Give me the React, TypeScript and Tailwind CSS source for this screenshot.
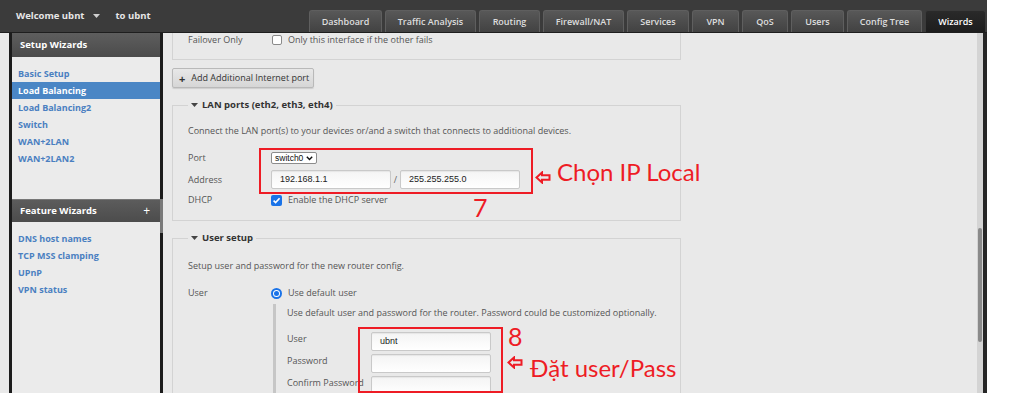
import React from "react";

const tabs: { label: string; w: string; active?: boolean }[] = [
  { label: "Dashboard", w: "w-[73px]" },
  { label: "Traffic Analysis", w: "w-[91px]" },
  { label: "Routing", w: "w-[61px]" },
  { label: "Firewall/NAT", w: "w-[81px]" },
  { label: "Services", w: "w-[62px]" },
  { label: "VPN", w: "w-[47px]" },
  { label: "QoS", w: "w-[46px]" },
  { label: "Users", w: "w-[53px]" },
  { label: "Config Tree", w: "w-[75px]" },
  { label: "Wizards", w: "w-[61px]", active: true },
];

function Caret({ className = "" }: { className?: string }) {
  return (
    <svg width="7" height="4" viewBox="0 0 7 4" className={className}>
      <path d="M0 0h7L3.5 4z" fill="currentColor" />
    </svg>
  );
}

function RedArrow() {
  return (
    <svg width="16" height="13" viewBox="0 0 16 13">
      <path
        d="M1.5 6.5L7 1.5V4.2H14.5V8.8H7V11.5Z"
        fill="none"
        stroke="#ee1c25"
        strokeWidth="2"
        strokeLinejoin="miter"
      />
    </svg>
  );
}

function Input({ value = "", w = "w-[120px]" }: { value?: string; w?: string }) {
  return (
    <div
      className={`${w} h-[19px] rounded-[2px] border border-[#c9c9c9] bg-gradient-to-b from-[#f4f4f4] to-white flex items-center pl-[8px] text-[9px] text-[#222] font-['Liberation_Sans',Arial,sans-serif] shadow-[inset_0_1px_1px_rgba(0,0,0,0.06)]`}
    >
      {value}
    </div>
  );
}

function Legend({ children }: { children: React.ReactNode }) {
  return (
    <legend className="ml-[0px] px-[3px] leading-[14px] text-[9.5px] font-bold text-[#333] flex items-center">
      <span className="inline-flex items-center gap-[4px]">
        <Caret className="text-[#444]" />
        {children}
      </span>
    </legend>
  );
}

export default function App() {
  return (
    <div className="relative w-[1024px] h-[393px] overflow-hidden bg-white font-['Open_Sans',sans-serif]">
      <div className="w-[987px] h-[393px] flex flex-col bg-[#e9e9e9]">
        {/* Header */}
        <header className="h-[32px] shrink-0 bg-[#3b3b3b] flex items-end">
          <div className="h-full flex items-center pl-[16px] text-[9.5px] font-bold text-[#e6e6e6]">
            <span>Welcome ubnt</span>
            <Caret className="ml-[8px] text-[#cfcfcf]" />
            <span className="ml-[16px]">to ubnt</span>
          </div>
          <nav className="ml-auto flex items-end gap-[3px] pr-[1px]">
            {tabs.map((t) => (
              <div
                key={t.label}
                className={`${t.w} h-[22px] rounded-t-[3px] border border-b-0 flex items-center justify-center text-[9px] font-semibold ${
                  t.active
                    ? "bg-gradient-to-b from-[#2a2a2a] to-[#1d1d1d] border-[#3a3a3a] text-white"
                    : "bg-gradient-to-b from-[#585858] to-[#424242] border-[#5f5f5f] text-[#dedede]"
                }`}
              >
                {t.label}
              </div>
            ))}
          </nav>
        </header>
        <div className="h-[1px] bg-[#1e1e1e] shrink-0" />

        {/* Body */}
        <div className="flex flex-1 min-h-0">
          <div className="w-[9px] bg-[#e9e9e9]" />
          {/* Sidebar */}
          <aside className="relative w-[154px] border-x-[3px] border-[#1c1c1c] bg-[#ebebeb] flex flex-col">
            <div className="h-[24px] bg-gradient-to-b from-[#5e5e5e] to-[#4b4b4b] flex items-center pl-[8px] text-[9.5px] font-bold text-white">
              Setup Wizards
            </div>
            <div className="h-[142px] pt-[8px] flex flex-col text-[9px] font-bold text-[#4a7fc1]">
              {["Basic Setup", "Load Balancing", "Load Balancing2", "Switch", "WAN+2LAN", "WAN+2LAN2"].map((l) => (
                <div
                  key={l}
                  className={`h-[17px] flex items-center pl-[6px] ${
                    l === "Load Balancing" ? "bg-[#4a86c5] text-white" : ""
                  }`}
                >
                  {l}
                </div>
              ))}
            </div>
            <div className="h-[23px] border-t border-[#777] bg-gradient-to-b from-[#5c5c5c] to-[#4c4c4c] flex items-center justify-between pl-[8px] pr-[10px] text-[9.5px] font-bold text-white">
              <span>Feature Wizards</span>
              <span className="text-[12px] font-normal leading-none">+</span>
            </div>
            <div className="pt-[8px] flex flex-col text-[9px] font-bold text-[#4a7fc1]">
              {["DNS host names", "TCP MSS clamping", "UPnP", "VPN status"].map((l) => (
                <div key={l} className="h-[17px] flex items-center pl-[6px]">
                  {l}
                </div>
              ))}
            </div>
            <div className="absolute right-[-3px] top-[166px] w-[3px] h-[34px] bg-[#7a7a7a]" />
          </aside>

          {/* Content */}
          <main className="w-[814px] pl-[9px] bg-[#e9e9e9] overflow-hidden text-[9px] text-[#555]">
            {/* Failover box (scrolled) */}
            <div className="w-[509px] h-[27px] border-x border-b border-[#d3d3d3] pl-[15px]">
              <div className="h-[13px] flex items-center leading-[13px]">
                <span className="w-[84px]">Failover Only</span>
                <span className="w-[10px] h-[10px] rounded-[2px] border border-[#8a8a8a] bg-white" />
                <span className="ml-[6px]">Only this interface if the other fails</span>
              </div>
            </div>

            <div className="mt-[8px] w-[142px] h-[20px] rounded-[2px] border border-[#b9b9b9] bg-gradient-to-b from-[#e8e8e8] to-[#d6d6d6] shadow-[0_1px_1px_rgba(0,0,0,0.12)] flex items-center pl-[6px] text-[#333]">
              <span className="text-[11px] font-bold leading-none mr-[6px]">+</span>
              <span>Add Additional Internet port</span>
            </div>

            {/* LAN ports */}
            <fieldset className="mt-[10px] w-[509px] border border-[#d3d3d3] px-[15px] pb-[13px]">
              <Legend>LAN ports (eth2, eth3, eth4)</Legend>
              <div className="mt-[12px] leading-[14px]">
                Connect the LAN port(s) to your devices or/and a switch that connects to additional devices.
              </div>
              <div className="mt-[13px] h-[14px] flex items-center">
                <span className="w-[83px]">Port</span>
                <div className="h-[12px] w-[46px] border border-[#8c8c8c] rounded-[2px] bg-white flex items-center justify-between px-[3px] text-[8.5px] text-[#111] font-['Liberation_Sans',Arial,sans-serif]">
                  <span>switch0</span>
                  <svg width="7" height="5" viewBox="0 0 7 5">
                    <path d="M0.8 0.8L3.5 3.6L6.2 0.8" fill="none" stroke="#111" strokeWidth="1.4" />
                  </svg>
                </div>
              </div>
              <div className="mt-[5px] h-[19px] flex items-center">
                <span className="w-[83px]">Address</span>
                <Input value="192.168.1.1" />
                <span className="w-[9px] text-center text-[#666]">/</span>
                <Input value="255.255.255.0" />
              </div>
              <div className="mt-[4px] h-[14px] flex items-center">
                <span className="w-[83px]">DHCP</span>
                <span className="w-[11px] h-[11px] rounded-[2px] bg-[#1a73e8] flex items-center justify-center">
                  <svg width="9" height="9" viewBox="0 0 9 9">
                    <path d="M1.6 4.6L3.6 6.6L7.6 2.2" fill="none" stroke="white" strokeWidth="1.6" />
                  </svg>
                </span>
                <span className="ml-[6px]">Enable the DHCP server</span>
              </div>
            </fieldset>

            {/* User setup */}
            <fieldset className="mt-[10px] w-[509px] border border-[#d3d3d3] px-[15px] pb-[20px]">
              <Legend>User setup</Legend>
              <div className="mt-[14px] leading-[14px]">Setup user and password for the new router config.</div>
              <div className="mt-[13px] h-[14px] flex items-center">
                <span className="w-[83px]">User</span>
                <span className="w-[11px] h-[11px] rounded-full border-[2px] border-[#1a73e8] bg-white flex items-center justify-center">
                  <span className="w-[5px] h-[5px] rounded-full bg-[#1a73e8]" />
                </span>
                <span className="ml-[6px]">Use default user</span>
              </div>
              <div className="mt-[4px] ml-[85px] border-l-[3px] border-[#c6c6c6] pl-[11px] pt-[2px] pb-[20px]">
                <div className="leading-[14px]">
                  Use default user and password for the router. Password could be customized optionally.
                </div>
                <div className="mt-[12px] flex flex-col gap-[3px]">
                  {[
                    ["User", "ubnt"],
                    ["Password", ""],
                    ["Confirm Password", ""],
                  ].map(([l, v]) => (
                    <div key={l} className="flex items-start">
                      <span className="w-[84px] leading-[14px]">{l}</span>
                      <Input value={v} />
                    </div>
                  ))}
                </div>
              </div>
            </fieldset>
          </main>

          {/* Scrollbar */}
          <div className="w-[6px] bg-[#d4d4d4] relative">
            <div className="absolute left-[1px] top-[195px] w-[4px] h-[114px] rounded-full bg-[#8a8a8a]" />
          </div>
          <div className="w-[4px] bg-[#262626]" />
        </div>
      </div>

      {/* Annotations */}
      <div className="absolute left-[259px] top-[148px] w-[274px] h-[46px] border-2 border-[#ee1c25]" />
      <div className="absolute left-[535px] top-[171px]">
        <RedArrow />
      </div>
      <div className="absolute left-[557px] top-[158px] text-[24px] leading-[28px] text-[#ee1c25] font-['Lato',sans-serif] whitespace-nowrap">
        Chọn IP Local
      </div>
      <div className="absolute left-[473px] top-[193px] text-[25px] leading-[28px] text-[#ee1c25] font-['Lato',sans-serif]">
        7
      </div>

      <div className="absolute left-[358px] top-[327px] w-[145px] h-[66px] border-2 border-[#ee1c25]" />
      <div className="absolute left-[508px] top-[322px] text-[25px] leading-[28px] text-[#ee1c25] font-['Lato',sans-serif]">
        8
      </div>
      <div className="absolute left-[507px] top-[356px]">
        <RedArrow />
      </div>
      <div className="absolute left-[530px] top-[354px] text-[24px] leading-[28px] text-[#ee1c25] font-['Lato',sans-serif] whitespace-nowrap">
        Đặt user/Pass
      </div>
    </div>
  );
}
